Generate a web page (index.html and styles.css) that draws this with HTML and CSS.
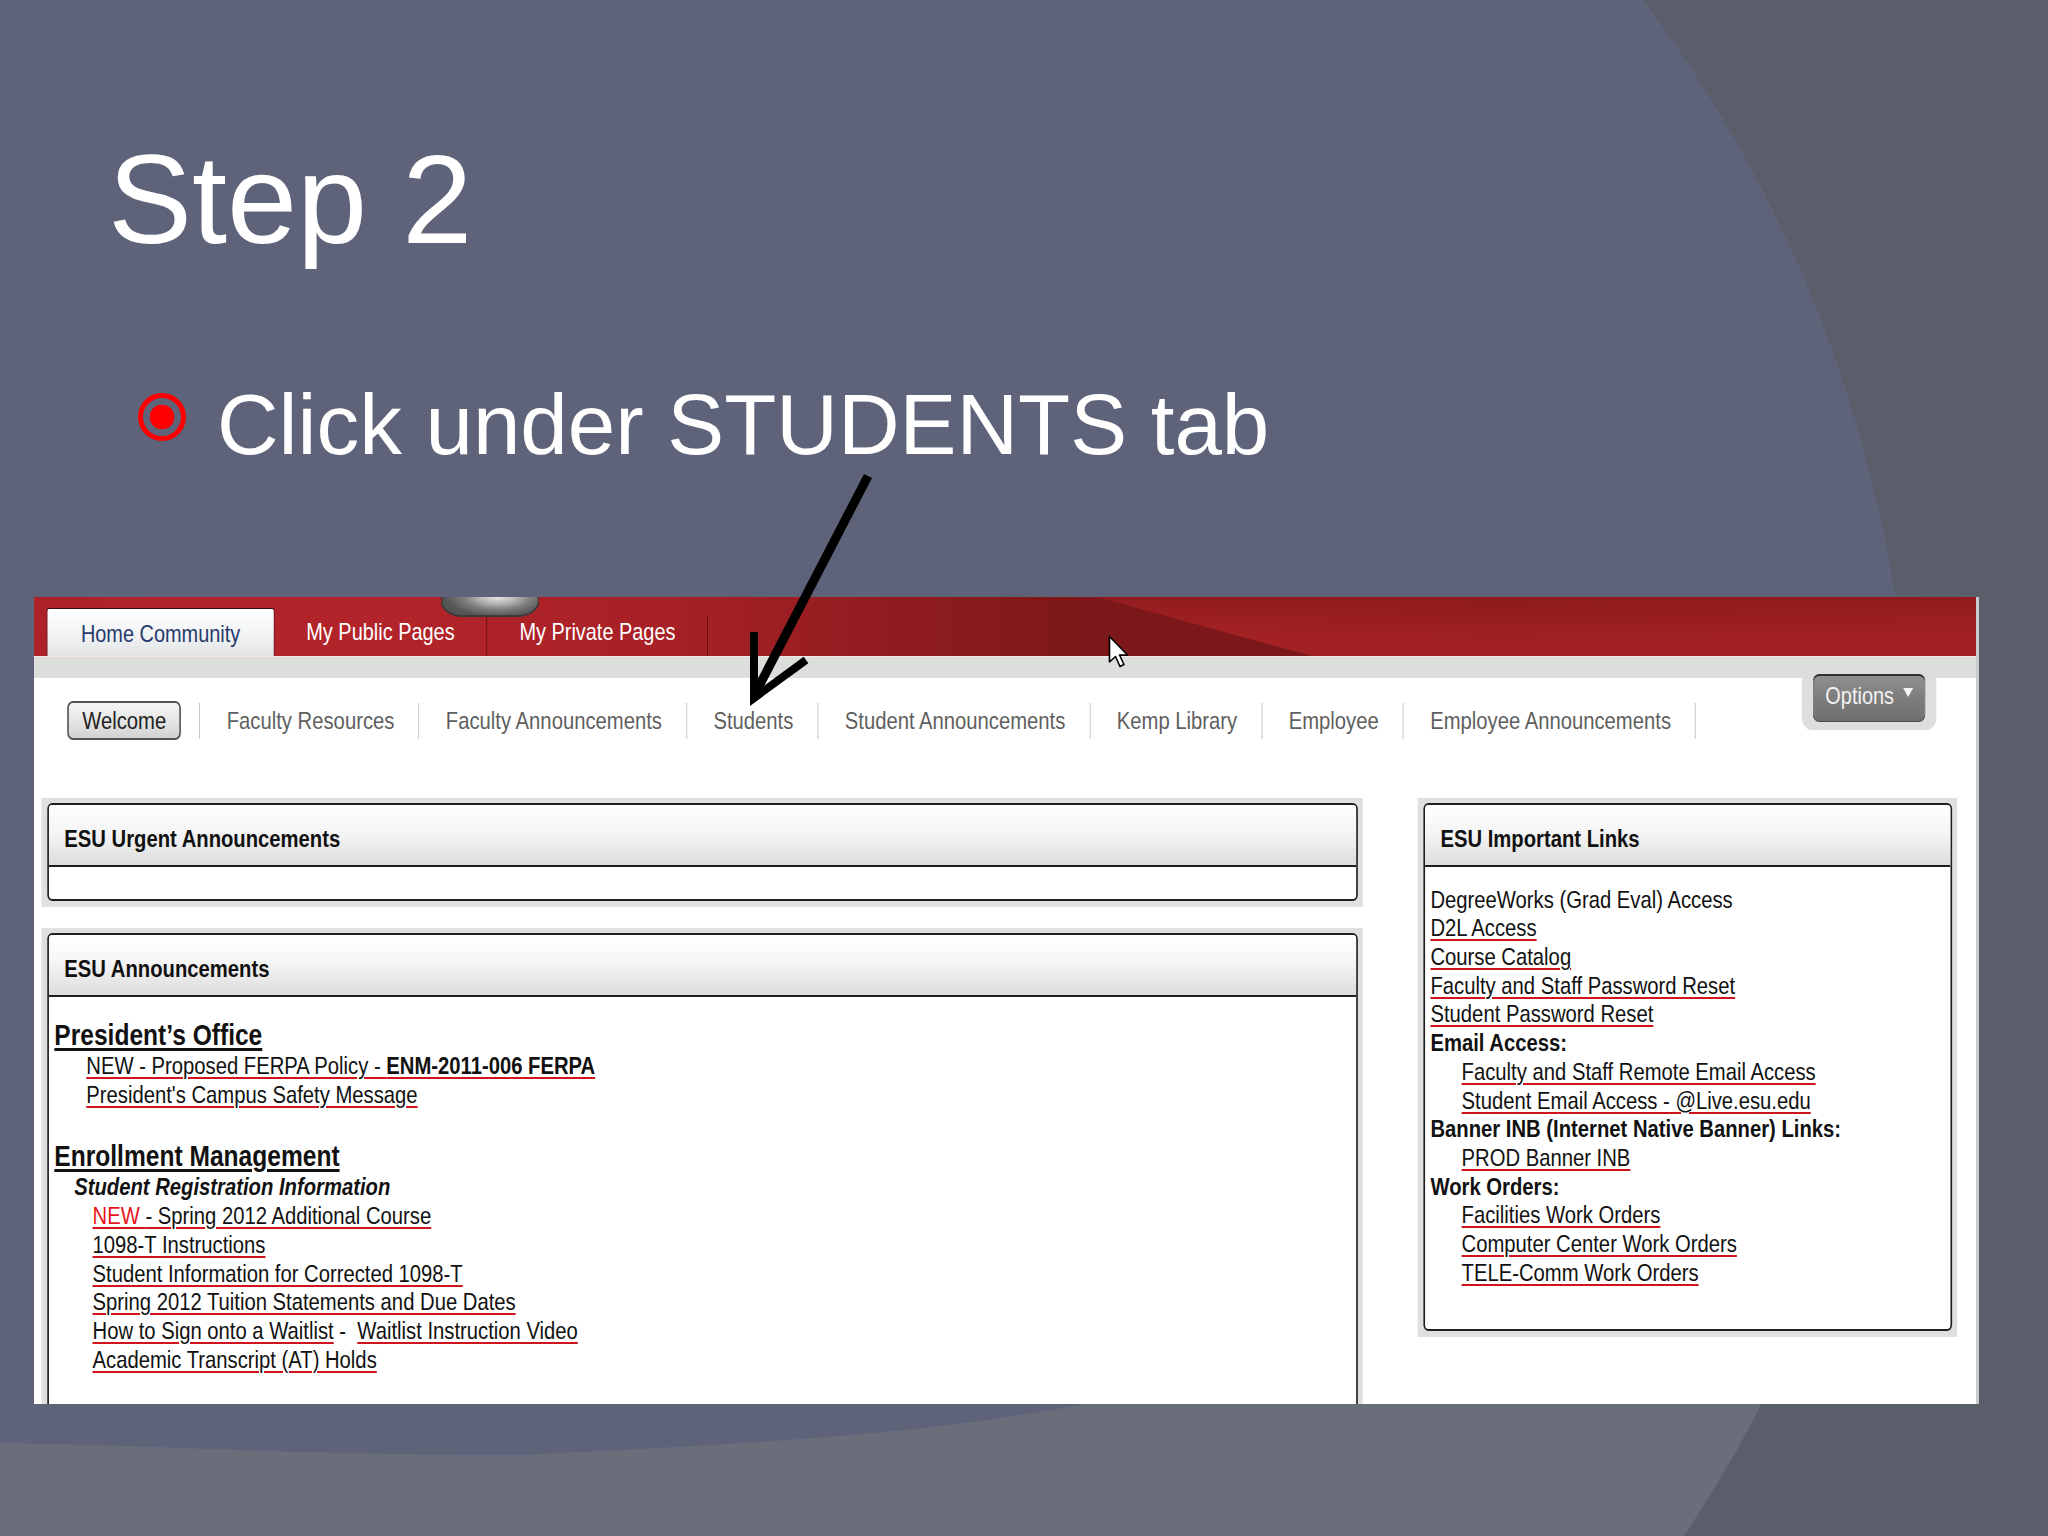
FILE: index.html
```html
<!DOCTYPE html>
<html>
<head>
<meta charset="utf-8">
<title>Step 2</title>
<link rel="stylesheet" href="styles.css">
</head>
<body>
<div class="slide">
  <svg class="bg" width="2048" height="1536" viewBox="0 0 2048 1536">
    <rect width="2048" height="1536" fill="#5a5e6a"/>
    <path d="M1643 0 A1330 1330 0 0 1 1684 1536 L0 1536 L0 0 Z" fill="#6a6e7b"/>
    <path d="M0 0 L1643 0 A1330 1330 0 0 1 1911 800 L1500 1150 C1250 1330 1150 1390 1084 1404 C950 1430 800 1442 522 1455 C300 1455 150 1445 0 1443 Z" fill="#5e637a"/>
  </svg>

  <div class="content">
    <h1 class="title">Step 2</h1>
    <div class="bullet-row">
      <span class="bullet"></span>
      <span class="bullet-text">Click under STUDENTS tab</span>
    </div>

    <div class="shot">
      <div class="shot-inner">
        <div class="topbar">
          <div class="bar-shine"></div>
          <div class="knob"></div>
          <div class="tab tab-active">Home Community</div>
          <div class="tab">My Public Pages</div>
          <div class="tab">My Private Pages</div>
        </div>
        <div class="strip"></div>
        <div class="subnav">
          <span class="welcome">Welcome</span>
          <span class="navlink">Faculty Resources</span>
          <span class="navlink">Faculty Announcements</span>
          <span class="navlink">Students</span>
          <span class="navlink">Student Announcements</span>
          <span class="navlink">Kemp Library</span>
          <span class="navlink">Employee</span>
          <span class="navlink last">Employee Announcements</span>
          <span class="options-wrap"><span class="options-btn">Options <span class="caret"></span></span></span>
        </div>

        <div class="columns">
          <div class="col-left">
            <div class="frame">
              <div class="box">
                <div class="box-head">ESU Urgent Announcements</div>
                <div class="urgent-body"></div>
              </div>
            </div>
            <div class="frame frame-ann">
              <div class="box">
                <div class="box-head">ESU Announcements</div>
                <div class="ann-body">
                  <div class="sec-title"><span>President’s Office</span></div>
                  <div class="line indent1"><a>NEW - Proposed FERPA Policy - <b>ENM-2011-006 FERPA</b></a></div>
                  <div class="line indent1"><a>President's Campus Safety Message</a></div>
                  <div class="sec-title sec-gap"><span>Enrollment Management</span></div>
                  <div class="sub-title">Student Registration Information</div>
                  <div class="line indent2"><a><span class="new">NEW </span>- Spring 2012 Additional Course</a></div>
                  <div class="line indent2"><a>1098-T Instructions</a></div>
                  <div class="line indent2"><a>Student Information for Corrected 1098-T</a></div>
                  <div class="line indent2"><a>Spring 2012 Tuition Statements and Due Dates</a></div>
                  <div class="line indent2"><a>How to Sign onto a Waitlist</a> -&nbsp; <a>Waitlist Instruction Video</a></div>
                  <div class="line indent2"><a>Academic Transcript (AT) Holds</a></div>
                </div>
              </div>
            </div>
          </div>

          <div class="col-right">
            <div class="frame">
              <div class="box">
                <div class="box-head">ESU Important Links</div>
                <div class="links-body">
                  <div class="line">DegreeWorks (Grad Eval) Access</div>
                  <div class="line"><a>D2L Access</a></div>
                  <div class="line"><a>Course Catalog</a></div>
                  <div class="line"><a>Faculty and Staff Password Reset</a></div>
                  <div class="line"><a>Student Password Reset</a></div>
                  <div class="line"><b>Email Access:</b></div>
                  <div class="line ind"><a>Faculty and Staff Remote Email Access</a></div>
                  <div class="line ind"><a>Student Email Access - @Live.esu.edu</a></div>
                  <div class="line"><b>Banner INB (Internet Native Banner) Links:</b></div>
                  <div class="line ind"><a>PROD Banner INB</a></div>
                  <div class="line"><b>Work Orders:</b></div>
                  <div class="line ind"><a>Facilities Work Orders</a></div>
                  <div class="line ind"><a>Computer Center Work Orders</a></div>
                  <div class="line ind"><a>TELE-Comm Work Orders</a></div>
                </div>
              </div>
            </div>
          </div>
        </div>
      </div>

      <svg class="cursor" width="22" height="34" viewBox="0 0 22 34">
        <path d="M1.5 1.5 L1.5 27 L7.5 21.5 L12 31.5 L16 29.5 L11.5 20 L19.5 20 Z" fill="#fff" stroke="#000" stroke-width="1.6" stroke-linejoin="round"/>
      </svg>
    </div>
  </div>

  <svg class="arrow" width="2048" height="1536" viewBox="0 0 2048 1536">
    <line x1="868" y1="476" x2="757" y2="690" stroke="#000" stroke-width="9"/>
    <polyline points="754,632 754,698 806,660" fill="none" stroke="#000" stroke-width="8" stroke-linejoin="miter"/>
  </svg>
</div>
</body>
</html>
```

FILE: styles.css
```css
html, body {
  margin: 0;
  padding: 0;
  background: #5e637a;
}

.slide {
  position: relative;
  width: 2048px;
  height: 1536px;
  overflow: hidden;
  font-family: "Liberation Sans", Arial, sans-serif;
}

.bg {
  position: absolute;
  left: 0;
  top: 0;
  z-index: 0;
}

.content {
  position: relative;
  z-index: 1;
  padding-top: 137px;
}

.title {
  margin: 0 0 0 108px;
  font-family: "Liberation Sans", Arial, sans-serif;
  font-weight: normal;
  font-size: 126px;
  line-height: 125px;
  height: 125px;
  color: #ffffff;
}

.bullet-row {
  display: flex;
  margin-top: 120px;
  padding-left: 138px;
  height: 86px;
}

.bullet {
  flex: none;
  width: 48px;
  height: 48px;
  margin-top: 11px;
  box-sizing: border-box;
  border: 5px solid #ff0000;
  border-radius: 50%;
  background: radial-gradient(circle, #ff0000 0 12px, transparent 12.6px);
}

.bullet-text {
  margin-left: 31px;
  font-size: 85.3px;
  line-height: 86px;
  color: #ffffff;
  white-space: nowrap;
}

/* ---------- screenshot ---------- */
.shot {
  position: relative;
  margin-top: 129px;
  margin-left: 34px;
  width: 1945px;
  height: 807px;
  box-sizing: border-box;
  border-right: 3px solid #c9c9c9;
  background: #ffffff;
  overflow: hidden;
}

/* the captured page is horizontally squeezed in the slide */
.shot-inner {
  width: 2340px;
  transform: scaleX(0.83);
  transform-origin: 0 0;
  font-family: "Liberation Sans", Arial, sans-serif;
  font-size: 24.4px;
  color: #111111;
}

.topbar {
  position: relative;
  height: 59px;
  display: flex;
  align-items: flex-end;
  padding-left: 14.5px;
  font-size: 24px;
  background: linear-gradient(90deg, #ad2228 0%, #b2242a 18%, #a82126 32%, #8d1b1e 46%, #7c1819 54%, #7b1819 100%);
}

.bar-shine {
  position: absolute;
  left: 0;
  top: 0;
  right: 0;
  bottom: 0;
  clip-path: polygon(1281px 0, 100% 0, 100% 100%, 1540px 100%);
  background:
    linear-gradient(180deg, rgba(60, 0, 0, 0.18) 0%, rgba(60, 0, 0, 0) 70%),
    linear-gradient(90deg, #b7282d 0%, #b2252a 25%, #a82226 50%, #a02022 75%, #a32123 100%);
}

.knob {
  position: absolute;
  left: 490px;
  top: 0;
  width: 119px;
  height: 20px;
  box-sizing: border-box;
  border: 2px solid #3a3a3a;
  border-top: none;
  border-radius: 0 0 26px 26px / 0 0 16px 16px;
  background: radial-gradient(ellipse 55% 110% at 58% 0%, #e6e6e6 0%, #b4b4b4 35%, #7c7c7c 65%, #545454 100%);
  z-index: 2;
}

.tab {
  position: relative;
  z-index: 1;
  box-sizing: border-box;
  height: 40px;
  padding: 1px 38.5px 9px;
  line-height: 30px;
  color: #ffffff;
  border-right: 1px solid #5e1010;
  white-space: nowrap;
}

.tab-active {
  height: 48px;
  padding: 10px 40px 8px 41px;
  color: #263a6c;
  border: 1px solid #3a0c0c;
  border-bottom: none;
  border-radius: 3px 3px 0 0;
  background: linear-gradient(180deg, #ffffff 0%, #f3f4f5 50%, #e2e4e6 100%);
}

.strip {
  height: 21px;
  border-top: 1px solid #f6e8e3;
  background: #dcdedb;
}

.subnav {
  display: flex;
  align-items: center;
  margin-top: 23px;
  padding-left: 40px;
  height: 39px;
  font-size: 24.4px;
  color: #5f5f5f;
}

.welcome {
  box-sizing: border-box;
  height: 39px;
  line-height: 35px;
  padding: 0 16px;
  margin-right: 22px;
  border: 2px solid #555555;
  border-radius: 7px;
  background: linear-gradient(180deg, #f6f6f6 0%, #e2e2e2 60%, #d2d2d2 100%);
  color: #222222;
}

.navlink {
  height: 36px;
  line-height: 36px;
  padding: 0 29px 0 32px;
  border-left: 1px solid #bdbdbd;
  white-space: nowrap;
}

.navlink.last {
  border-right: 1px solid #bdbdbd;
}

.options-wrap {
  align-self: flex-start;
  margin-left: auto;
  margin-right: 48px;
  margin-top: -23px;
  padding: 0 13px 8px;
  background: #dedfdd;
  border-radius: 0 0 12px 12px;
}

.options-btn {
  display: flex;
  align-items: center;
  gap: 11px;
  height: 48px;
  margin-top: -4px;
  box-sizing: border-box;
  padding: 0 14px 6px 14px;
  border: 1px solid #4a4a4a;
  border-top: 2px solid #303030;
  border-radius: 8px;
  background: linear-gradient(180deg, #8f8f8f 0%, #7d7d7d 50%, #707070 100%);
  color: #f2f2f2;
  font-size: 24px;
}

.caret {
  width: 0;
  height: 0;
  margin-top: -6px;
  border-left: 6px solid transparent;
  border-right: 6px solid transparent;
  border-top: 9px solid #f4f4f4;
}

.columns {
  display: flex;
  gap: 66px;
  margin-top: 58px;
  padding-left: 8.5px;
}

.col-left {
  width: 1592px;
}

.col-right {
  width: 650px;
}

.frame {
  background: #e0e0e0;
  padding: 5px 6px 6px 7px;
}

.frame-ann {
  margin-top: 21px;
}

.box {
  border: 2px solid #1e1e1e;
  border-radius: 6px;
  background: #ffffff;
  overflow: hidden;
}

.box-head {
  box-sizing: border-box;
  height: 62px;
  padding: 8px 0 0 19px;
  display: flex;
  align-items: center;
  border-bottom: 2px solid #1e1e1e;
  background: linear-gradient(180deg, #ffffff 0%, #f5f5f5 45%, #dddddd 100%);
  font-weight: bold;
  font-size: 24.4px;
  color: #111111;
}

.urgent-body {
  height: 32px;
}

.ann-body {
  padding: 21px 8px 80px 7px;
}

.sec-title {
  font-weight: bold;
  font-size: 29.6px;
  line-height: 34px;
}

.sec-title span {
  text-decoration: underline;
  text-decoration-thickness: 3px;
  text-underline-offset: 3px;
}

.sec-gap {
  margin-top: 30px;
}

.sub-title {
  padding-left: 24px;
  font-weight: bold;
  font-style: italic;
  line-height: 28.7px;
}

.line {
  line-height: 28.7px;
  white-space: nowrap;
}

.indent1 {
  padding-left: 38.5px;
}

.indent2 {
  padding-left: 46px;
}

a {
  color: #111111;
  text-decoration: underline;
  text-decoration-color: #d0141e;
  text-decoration-thickness: 2px;
  text-underline-offset: 3px;
}

.new {
  color: #e8141e;
}

.links-body {
  padding: 18.6px 8px 42px 7px;
}

.links-body .ind {
  padding-left: 37.5px;
}

.cursor {
  position: absolute;
  left: 1074px;
  top: 38px;
  z-index: 5;
}

.arrow {
  position: absolute;
  left: 0;
  top: 0;
  z-index: 3;
  pointer-events: none;
}
```
